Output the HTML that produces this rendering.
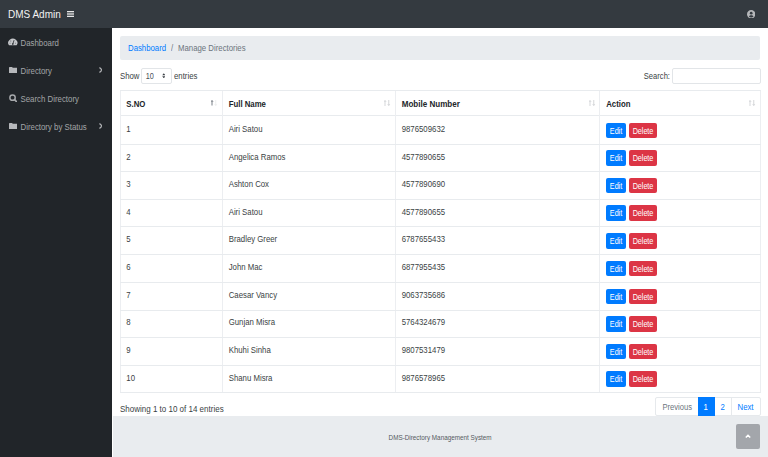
<!DOCTYPE html>
<html><head><meta charset="utf-8">
<style>
*{box-sizing:border-box;margin:0;padding:0}
html,body{width:768px;height:457px;overflow:hidden;background:#fff;font-family:"Liberation Sans",sans-serif;color:#212529}
.a{position:absolute;white-space:nowrap}
#nav{left:0;top:0;width:768px;height:28px;background:#343a40}
#side{left:0;top:28px;width:112px;height:429px;background:#212529}
.brand{left:8px;top:8.3px;font-size:10px;line-height:14px;color:#f2f2f2;transform:scaleY(1.04)}
.sl{font-size:7.85px;line-height:12px;color:#a3a5a8;left:20.5px;transform:scaleY(1.15)}
.bc{left:120px;top:36px;width:640px;height:24px;background:#e9ecef;border-radius:2px}
.t8{font-size:7.8px;line-height:12px;transform:scaleY(1.15);color:#3a3f44}
.hline{left:120px;width:640.5px;height:1px;background:#e8ebee}
.vline{top:90.5px;width:1px;height:302px;background:#eceef1}
.th{font-weight:bold;font-size:7.8px;line-height:12px;top:98.6px;transform:scaleY(1.15)}
.sort{font-size:7px;line-height:10px;color:#c4c7ca;top:98px;letter-spacing:-1px}
.btn{height:15.5px;border-radius:2px;color:#fff;font-size:7.25px;letter-spacing:-0.05px;line-height:15.5px;text-align:center}
.btn span{display:inline-block;transform:translateY(0.8px) scaleY(1.15)}
.edit{left:606px;width:20px;background:#007bff}
.del{left:629px;width:28px;background:#dc3545}
#foot{left:113px;top:416px;width:655px;height:41px;background:#e9ecef}
</style></head><body>
<div id="nav" class="a"></div>
<div class="a brand">DMS Admin</div>
<!-- hamburger -->
<svg class="a" style="left:67px;top:11px" width="7" height="6" viewBox="0 0 7 6"><rect x="0" y="0" width="7" height="1.3" fill="#e8e8e8"/><rect x="0" y="2.35" width="7" height="1.3" fill="#e8e8e8"/><rect x="0" y="4.7" width="7" height="1.3" fill="#e8e8e8"/></svg>
<!-- user icon -->
<svg class="a" style="left:747px;top:10px" width="8.4" height="8.4" viewBox="0 0 16 16"><circle cx="8" cy="8" r="8" fill="#b5b7ba"/><circle cx="8" cy="6" r="2.6" fill="#343a40"/><path d="M3.6 12.4c1-1.7 2.6-2.6 4.4-2.6s3.4.9 4.4 2.6c-1.2 1.1-2.7 1.7-4.4 1.7s-3.2-.6-4.4-1.7z" fill="#343a40"/></svg>

<div id="side" class="a"></div>
<!-- sidebar icons -->
<svg class="a" style="left:8.1px;top:38.4px" width="9.9" height="7.6" viewBox="0 0 105 90" preserveAspectRatio="none"><path d="M10.8 86A49 49 0 1 1 91.2 86Z" fill="#c4c6c9"/><path d="M51 72L63 30" stroke="#212529" stroke-width="9" stroke-linecap="round"/><circle cx="51" cy="72" r="9" fill="#212529"/><circle cx="22" cy="60" r="5" fill="#212529"/><circle cx="30" cy="36" r="5" fill="#212529"/><circle cx="80" cy="60" r="5" fill="#212529"/></svg>
<div class="a sl" style="top:37.6px">Dashboard</div>
<svg class="a" style="left:8.8px;top:66.5px" width="8.6" height="6.6" viewBox="0 0 13 10"><path d="M0 1a1 1 0 0 1 1-1h3.5l1.3 1.3H12a1 1 0 0 1 1 1V9a1 1 0 0 1-1 1H1a1 1 0 0 1-1-1z" fill="#b6b8bb"/></svg>
<div class="a sl" style="top:65.6px">Directory</div>
<svg class="a" style="left:98.6px;top:66.8px" width="3.6" height="6" viewBox="0 0 6 10"><path d="M0.8 0.8L5.2 5 0.8 9.2" stroke="#aeb0b3" stroke-width="2" fill="none" stroke-linejoin="miter"/></svg>
<svg class="a" style="left:8.6px;top:93.6px" width="8.6" height="8.6" viewBox="0 0 16 16"><circle cx="6.6" cy="6.8" r="5" stroke="#a7a9ac" stroke-width="2.7" fill="none"/><path d="M10.4 10.6l4.4 4.4" stroke="#a7a9ac" stroke-width="3.2" stroke-linecap="round"/></svg>
<div class="a sl" style="top:93.6px">Search Directory</div>
<svg class="a" style="left:8.8px;top:122.5px" width="8.6" height="6.6" viewBox="0 0 13 10"><path d="M0 1a1 1 0 0 1 1-1h3.5l1.3 1.3H12a1 1 0 0 1 1 1V9a1 1 0 0 1-1 1H1a1 1 0 0 1-1-1z" fill="#b6b8bb"/></svg>
<div class="a sl" style="top:121.6px">Directory by Status</div>
<svg class="a" style="left:98.6px;top:123px" width="3.6" height="6" viewBox="0 0 6 10"><path d="M0.8 0.8L5.2 5 0.8 9.2" stroke="#aeb0b3" stroke-width="2" fill="none" stroke-linejoin="miter"/></svg>

<!-- breadcrumb -->
<div class="a bc"></div>
<div class="a t8" style="left:128px;top:43.4px;color:#007bff">Dashboard</div>
<div class="a t8" style="left:171px;top:43.4px;color:#6c757d">/</div>
<div class="a t8" style="left:178px;top:43.4px;color:#6c757d">Manage Directories</div>

<!-- show entries -->
<div class="a t8" style="left:120px;top:70.5px;color:#3a3f44">Show</div>
<div class="a" style="left:141px;top:68px;width:31px;height:15.5px;border:1px solid #e2e5e8;border-radius:2px"></div>
<div class="a" style="left:145.8px;top:71.4px;font-size:7.3px;line-height:12px;color:#495057;transform:scaleY(1.12)">10</div>
<svg class="a" style="left:161.8px;top:72.8px" width="3.6" height="5.6" viewBox="0 0 6 10"><path d="M3 0.5L5.8 4H0.2z M3 9.5L5.8 6H0.2z" fill="#3a3f44"/></svg>
<div class="a t8" style="left:174px;top:70.5px;color:#3a3f44">entries</div>
<div class="a t8" style="left:643.8px;top:70.5px;color:#3a3f44;font-size:7.6px">Search:</div>
<div class="a" style="left:672px;top:68px;width:88.5px;height:15.5px;border:1px solid #e2e5e8;border-radius:2px"></div>

<!-- table -->
<div class="a hline" style="top:90px"></div>
<div class="a hline" style="top:115px;height:1px"></div>
<div class="a vline" style="left:120px"></div>
<div class="a vline" style="left:222px"></div>
<div class="a vline" style="left:395px"></div>
<div class="a vline" style="left:599px"></div>
<div class="a vline" style="left:760px"></div>
<div class="a th" style="left:126.3px">S.NO</div>
<div class="a th" style="left:228.7px">Full Name</div>
<div class="a th" style="left:401.7px;font-size:8.05px">Mobile Number</div>
<div class="a th" style="left:606.2px">Action</div>
<svg class="a" style="left:210.8px;top:99.5px" width="7" height="6" viewBox="0 0 14 12"><path d="M2 11V1.5M0 3.5L2 1 4 3.5" stroke="#6a7078" stroke-width="1.8" fill="none"/><path d="M9.5 0V10.5M7.5 8.5L9.5 11 11.5 8.5" stroke="#e3e5e7" stroke-width="1.3" fill="none"/></svg>
<svg class="a" style="left:384.2px;top:99.5px" width="7" height="6" viewBox="0 0 14 12"><path d="M2 12V1.5M0 3.5L2 1 4 3.5" stroke="#c3c6ca" stroke-width="1.4" fill="none"/><path d="M9.5 0V10.5M7.5 8.5L9.5 11 11.5 8.5" stroke="#c3c6ca" stroke-width="1.4" fill="none"/></svg>
<svg class="a" style="left:588.6px;top:99.5px" width="7" height="6" viewBox="0 0 14 12"><path d="M2 12V1.5M0 3.5L2 1 4 3.5" stroke="#c3c6ca" stroke-width="1.4" fill="none"/><path d="M9.5 0V10.5M7.5 8.5L9.5 11 11.5 8.5" stroke="#c3c6ca" stroke-width="1.4" fill="none"/></svg>
<svg class="a" style="left:749px;top:99.5px" width="7" height="6" viewBox="0 0 14 12"><path d="M2 12V1.5M0 3.5L2 1 4 3.5" stroke="#c3c6ca" stroke-width="1.4" fill="none"/><path d="M9.5 0V10.5M7.5 8.5L9.5 11 11.5 8.5" stroke="#c3c6ca" stroke-width="1.4" fill="none"/></svg>
<!--ROWS-->
<div class="a hline" style="top:144px"></div>
<div class="a t8" style="left:126.3px;top:123.80px">1</div>
<div class="a t8" style="left:228.7px;top:123.80px">Airi Satou</div>
<div class="a t8" style="left:401.7px;top:123.80px">9876509632</div>
<div class="a btn edit" style="top:122.65px"><span>Edit</span></div>
<div class="a btn del" style="top:122.65px"><span>Delete</span></div>
<div class="a hline" style="top:171px"></div>
<div class="a t8" style="left:126.3px;top:151.55px">2</div>
<div class="a t8" style="left:228.7px;top:151.55px">Angelica Ramos</div>
<div class="a t8" style="left:401.7px;top:151.55px">4577890655</div>
<div class="a btn edit" style="top:150.40px"><span>Edit</span></div>
<div class="a btn del" style="top:150.40px"><span>Delete</span></div>
<div class="a hline" style="top:199px"></div>
<div class="a t8" style="left:126.3px;top:178.95px">3</div>
<div class="a t8" style="left:228.7px;top:178.95px">Ashton Cox</div>
<div class="a t8" style="left:401.7px;top:178.95px">4577890690</div>
<div class="a btn edit" style="top:177.80px"><span>Edit</span></div>
<div class="a btn del" style="top:177.80px"><span>Delete</span></div>
<div class="a hline" style="top:226px"></div>
<div class="a t8" style="left:126.3px;top:206.55px">4</div>
<div class="a t8" style="left:228.7px;top:206.55px">Airi Satou</div>
<div class="a t8" style="left:401.7px;top:206.55px">4577890655</div>
<div class="a btn edit" style="top:205.40px"><span>Edit</span></div>
<div class="a btn del" style="top:205.40px"><span>Delete</span></div>
<div class="a hline" style="top:254px"></div>
<div class="a t8" style="left:126.3px;top:234.15px">5</div>
<div class="a t8" style="left:228.7px;top:234.15px">Bradley Greer</div>
<div class="a t8" style="left:401.7px;top:234.15px">6787655433</div>
<div class="a btn edit" style="top:233.00px"><span>Edit</span></div>
<div class="a btn del" style="top:233.00px"><span>Delete</span></div>
<div class="a hline" style="top:282px"></div>
<div class="a t8" style="left:126.3px;top:261.95px">6</div>
<div class="a t8" style="left:228.7px;top:261.95px">John Mac</div>
<div class="a t8" style="left:401.7px;top:261.95px">6877955435</div>
<div class="a btn edit" style="top:260.80px"><span>Edit</span></div>
<div class="a btn del" style="top:260.80px"><span>Delete</span></div>
<div class="a hline" style="top:310px"></div>
<div class="a t8" style="left:126.3px;top:289.80px">7</div>
<div class="a t8" style="left:228.7px;top:289.80px">Caesar Vancy</div>
<div class="a t8" style="left:401.7px;top:289.80px">9063735686</div>
<div class="a btn edit" style="top:288.65px"><span>Edit</span></div>
<div class="a btn del" style="top:288.65px"><span>Delete</span></div>
<div class="a hline" style="top:337px"></div>
<div class="a t8" style="left:126.3px;top:317.40px">8</div>
<div class="a t8" style="left:228.7px;top:317.40px">Gunjan Misra</div>
<div class="a t8" style="left:401.7px;top:317.40px">5764324679</div>
<div class="a btn edit" style="top:316.25px"><span>Edit</span></div>
<div class="a btn del" style="top:316.25px"><span>Delete</span></div>
<div class="a hline" style="top:365px"></div>
<div class="a t8" style="left:126.3px;top:345.00px">9</div>
<div class="a t8" style="left:228.7px;top:345.00px">Khuhi Sinha</div>
<div class="a t8" style="left:401.7px;top:345.00px">9807531479</div>
<div class="a btn edit" style="top:343.85px"><span>Edit</span></div>
<div class="a btn del" style="top:343.85px"><span>Delete</span></div>
<div class="a hline" style="top:392px"></div>
<div class="a t8" style="left:126.3px;top:372.50px">10</div>
<div class="a t8" style="left:228.7px;top:372.50px">Shanu Misra</div>
<div class="a t8" style="left:401.7px;top:372.50px">9876578965</div>
<div class="a btn edit" style="top:371.35px"><span>Edit</span></div>
<div class="a btn del" style="top:371.35px"><span>Delete</span></div>
<!--/ROWS-->

<div class="a" style="left:120px;top:404.2px;font-size:8px;line-height:12px;color:#3a3f44;transform:scaleY(1.15)">Showing 1 to 10 of 14 entries</div>

<!-- pagination -->
<div class="a" style="left:655px;top:397px;width:105.5px;height:19px;border:1px solid #e6e9ec;border-radius:2px"></div>
<div class="a" style="left:698px;top:397px;width:17px;height:19px;background:#007bff"></div>
<div class="a" style="left:731px;top:397px;width:1px;height:19px;background:#e6e9ec"></div>
<div class="a t8" style="left:662.5px;top:401.8px;color:#6c757d;font-size:7.6px">Previous</div>
<div class="a t8" style="left:703.5px;top:401.8px;color:#fff">1</div>
<div class="a t8" style="left:720.5px;top:401.8px;color:#007bff">2</div>
<div class="a t8" style="left:737.5px;top:401.8px;color:#007bff">Next</div>

<div id="foot" class="a"></div>
<div class="a" style="left:388.6px;top:432.5px;font-size:6.33px;line-height:10px;color:#555b61;transform:scaleY(1.15)">DMS-Directory Management System</div>
<div class="a" style="left:736px;top:424.2px;width:24.2px;height:24.6px;background:#a3a6ab;border-radius:2px"></div>
<svg class="a" style="left:745px;top:434px" width="6" height="4.2" viewBox="0 0 10 7"><path d="M1.3 5.8L5 2.2 8.7 5.8" stroke="#fff" stroke-width="2.6" fill="none"/></svg>
</body></html>
